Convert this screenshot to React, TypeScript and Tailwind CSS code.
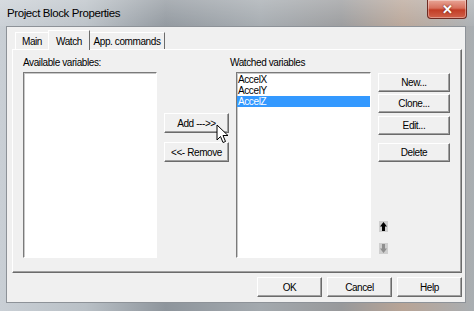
import type { ReactNode } from 'react'

const font = { fontFamily: '"Liberation Sans", Arial, sans-serif' }

function Btn({ children, className = '' }: { children: ReactNode; className?: string }) {
  return (
    <div
      className={`flex items-center justify-center border border-t-white border-l-white border-r-[#6b6b6b] border-b-[#6b6b6b] bg-[#f0f0f0] text-black shadow-[inset_-1px_-1px_0_#a0a0a0] ${className}`}
    >
      {children}
    </div>
  )
}

function ListBox({ children, className = '' }: { children?: ReactNode; className?: string }) {
  return (
    <div
      className={`border border-t-[#7a7a7a] border-l-[#7a7a7a] border-r-white border-b-white bg-white shadow-[inset_1px_1px_0_#c8c8c8] ${className}`}
    >
      {children}
    </div>
  )
}

function Cursor() {
  return (
    <svg className="absolute left-[216px] top-[124px]" width="14" height="20" viewBox="0 0 14 20">
      <path
        d="M1 1 L1 16 L4.5 12.5 L7 18.5 L9.5 17.5 L7 11.5 L12 11.5 Z"
        fill="white"
        stroke="black"
        strokeWidth="1"
        strokeLinejoin="miter"
      />
    </svg>
  )
}

export default function App() {
  return (
    <div
      className="relative h-[311px] w-[474px] overflow-hidden bg-[linear-gradient(90deg,#c9cfd5_0%,#b9c0c6_18%,#8e959c_35%,#a3a9ae_55%,#98999b_72%,#b8a496_85%,#a9aeb2_100%)]"
      style={font}
    >
      {/* glass sheen */}
      <div className="pointer-events-none absolute inset-x-0 top-0 h-[26px] bg-[linear-gradient(180deg,rgba(255,255,255,0.25),rgba(255,255,255,0.05))]" />

      {/* title bar */}
      <div className="relative flex h-[26px] items-start">
        <div className="pl-[7px] pt-[6px] text-[11.5px] leading-[14px] tracking-[-0.4px] text-black">Project Block Properties</div>
        <div className="ml-auto mr-[7px] flex h-[19px] w-[40px] items-center justify-center rounded-b-[4px] border border-t-0 border-[#6e2a22] bg-[linear-gradient(180deg,#e8a596_0%,#d7705d_45%,#c23d26_55%,#d0614a_100%)] shadow-[inset_0_0_0_1px_rgba(255,255,255,0.35)]">
          <span className="text-[13px] font-bold leading-none text-white [text-shadow:0_0_2px_#5a1a10]">✕</span>
        </div>
      </div>

      {/* client area */}
      <div className="ml-[6px] flex h-[277px] w-[460px] flex-col border border-[#8d9298] bg-[#f0f0f0] text-[10px] tracking-[-0.4px]">
        {/* tabs */}
        <div className="flex h-[22px] items-end whitespace-nowrap pl-[8px] text-black">
          <div className="flex h-[17px] w-[33px] items-center justify-center border-l border-t border-white">Main</div>
          <div className="relative z-10 -mb-px flex h-[20px] w-[42px] items-start justify-center border-l border-t border-r border-l-white border-t-white border-r-[#6b6b6b] bg-[#f0f0f0] pt-[3px]">
            Watch
          </div>
          <div className="flex h-[17px] w-[75px] items-center justify-center border-r border-t border-t-white border-r-[#6b6b6b]">
            App. commands
          </div>
        </div>

        {/* panel */}
        <div className="ml-[5px] flex h-[224px] w-[450px] border border-t-white border-l-white border-r-[#6b6b6b] border-b-[#6b6b6b] pl-[10px] pt-[7px] text-black shadow-[inset_-1px_-1px_0_#a0a0a0]">
          <div className="flex w-[134px] flex-col">
            <div className="h-[15px] leading-[12px]">Available variables:</div>
            <ListBox className="h-[186px] w-[134px]" />
          </div>

          <div className="ml-[7px] flex w-[65px] flex-col pt-[56px]">
            <Btn className="h-[20px] w-[65px]">Add ---&gt;&gt;</Btn>
            <Btn className="mt-[9px] h-[20px] w-[65px]">&lt;&lt;- Remove</Btn>
          </div>

          <div className="ml-px flex w-[141px] flex-col">
            <div className="h-[15px] leading-[12px]">Watched variables</div>
            <ListBox className="ml-[6px] h-[186px] w-[135px] pt-[1px]">
              <div className="h-[11px] pl-[1px] leading-[11px]">AccelX</div>
              <div className="h-[11px] pl-[1px] leading-[11px]">AccelY</div>
              <div className="h-[11px] bg-[#3399ff] pl-[1px] leading-[11px] text-white">AccelZ</div>
            </ListBox>
          </div>

          <div className="ml-[7px] flex w-[72px] flex-col pt-[16px]">
            <Btn className="h-[19px] w-[72px]">New...</Btn>
            <Btn className="mt-[2px] h-[19px] w-[72px]">Clone...</Btn>
            <Btn className="mt-[3px] h-[19px] w-[72px]">Edit...</Btn>
            <Btn className="mt-[8px] h-[19px] w-[72px]">Delete</Btn>
            <div className="ml-[1px] mt-[59px] flex h-[11px] w-[9px] items-center justify-center bg-[#cfcfcf]">
              <svg width="7" height="9" viewBox="0 0 7 9">
                <path d="M3.5 0 L7 4.5 L5 4.5 L5 9 L2 9 L2 4.5 L0 4.5 Z" fill="#000" />
              </svg>
            </div>
            <div className="ml-[1px] mt-[11px] flex h-[11px] w-[9px] items-center justify-center bg-[#cfcfcf]">
              <svg width="7" height="9" viewBox="0 0 7 9">
                <path d="M3.5 9 L7 4.5 L5 4.5 L5 0 L2 0 L2 4.5 L0 4.5 Z" fill="#8f8f8f" />
              </svg>
            </div>
          </div>
        </div>

        {/* bottom buttons */}
        <div className="mt-[4px] flex justify-end gap-[5px] pr-[3px]">
          <Btn className="h-[20px] w-[65px]">OK</Btn>
          <Btn className="h-[20px] w-[65px]">Cancel</Btn>
          <Btn className="h-[20px] w-[65px]">Help</Btn>
        </div>
      </div>

      <Cursor />
    </div>
  )
}
